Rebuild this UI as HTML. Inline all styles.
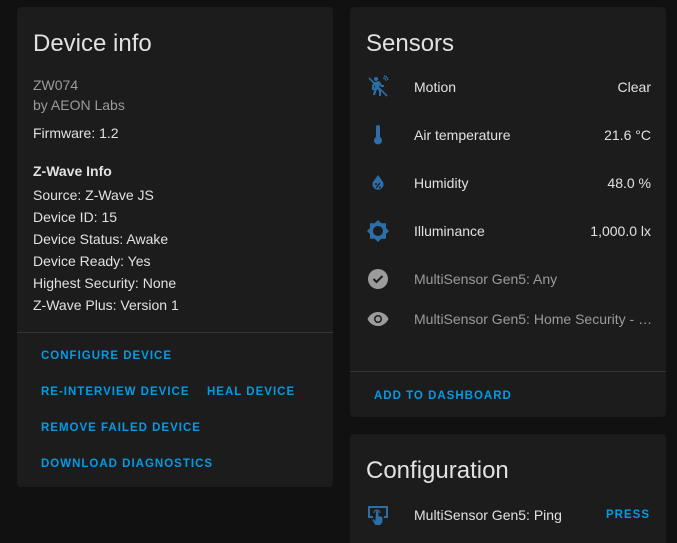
<html style="overflow:hidden;height:543px"><head><style>
body{margin:0;background:#111;font-family:"Liberation Sans",sans-serif;width:677px;height:543px;overflow:hidden;position:relative}
.card{position:absolute;background:#1c1c1c;border-radius:4px}
.t{position:absolute;white-space:nowrap;font-size:14px;color:#e1e1e1}
.h{font-size:24px;color:#e1e1e1}
.g{color:#9b9b9b}
.b{position:absolute;color:#039be5;font-size:11.5px;font-weight:bold;letter-spacing:1px;white-space:nowrap}
.div{position:absolute;height:1px;background:#333}
svg{position:absolute}
</style></head><body>
<div class="card" style="left:17px;top:7px;width:316px;height:480px"></div>
<div class="card" style="left:350px;top:7px;width:316px;height:410px"></div>
<div class="card" style="left:350px;top:434px;width:316px;height:109px;border-radius:4px 4px 0 0"></div>

<div class="t h" style="left:33px;top:30px">Device info</div>
<div class="t g" style="left:33px;top:77px">ZW074</div>
<div class="t g" style="left:33px;top:97px">by AEON Labs</div>
<div class="t" style="left:33px;top:125px">Firmware: 1.2</div>
<div class="t" style="left:33px;top:163px;font-weight:bold">Z-Wave Info</div>
<div class="t" style="left:33px;top:187px">Source: Z-Wave JS</div>
<div class="t" style="left:33px;top:209px">Device ID: 15</div>
<div class="t" style="left:33px;top:231px">Device Status: Awake</div>
<div class="t" style="left:33px;top:253px">Device Ready: Yes</div>
<div class="t" style="left:33px;top:275px">Highest Security: None</div>
<div class="t" style="left:33px;top:297px">Z-Wave Plus: Version 1</div>
<div class="div" style="left:17px;top:332px;width:316px"></div>
<div class="b" style="left:41px;top:350px">CONFIGURE DEVICE</div>
<div class="b" style="left:41px;top:386px">RE-INTERVIEW DEVICE</div>
<div class="b" style="left:207px;top:386px">HEAL DEVICE</div>
<div class="b" style="left:41px;top:422px">REMOVE FAILED DEVICE</div>
<div class="b" style="left:41px;top:458px">DOWNLOAD DIAGNOSTICS</div>

<div class="t h" style="left:366px;top:30px">Sensors</div>
<svg style="left:366px;top:75px" width="24" height="24" viewBox="0 0 24 24" fill="#2c6ea8"><circle cx="10" cy="4" r="2"/><path d="M9 7l-3 3v5h2v-4l1-1-2 10h2l2-6 2 2v5h2v-6l-2-2 .5-3 1.5 2h3v-2h-2l-2-3c-.5-1-1.5-1-2.5-.5z"/><path d="M3 3l18 18" stroke="#2c6ea8" stroke-width="1.6"/><path d="M17 3a3 3 0 013 3M18 1a5 5 0 014 4" stroke="#2c6ea8" fill="none" stroke-width="1.2"/></svg>
<div class="t" style="left:414px;top:79px">Motion</div><div class="t" style="right:26px;top:79px">Clear</div>
<svg style="left:366px;top:123px" width="24" height="24" viewBox="0 0 24 24" fill="#2c6ea8"><path d="M10 4a2 2 0 014 0v10a4 4 0 11-4 0z"/></svg>
<div class="t" style="left:414px;top:127px">Air temperature</div><div class="t" style="right:26px;top:127px">21.6 °C</div>
<svg style="left:366px;top:171px" width="24" height="24" viewBox="0 0 24 24" fill="#2c6ea8"><path d="M12 4l5 7a5.5 5.5 0 11-10 0z"/><path d="M10 17l4-5" stroke="#1c1c1c" stroke-width="1.3"/><circle cx="10" cy="13" r="1" fill="#1c1c1c"/><circle cx="14" cy="16.5" r="1" fill="#1c1c1c"/></svg>
<div class="t" style="left:414px;top:175px">Humidity</div><div class="t" style="right:26px;top:175px">48.0 %</div>
<svg style="left:366px;top:219px" width="24" height="24" viewBox="0 0 24 24" fill="#2c6ea8"><path d="M12 1l3.3 3.3H20v4.7l3 3-3 3v4.7h-4.7L12 23l-3.3-3.3H4V15l-3-3 3-3V4.3h4.7z"/><circle cx="12" cy="12" r="5" fill="#1c1c1c"/></svg>
<div class="t" style="left:414px;top:223px">Illuminance</div><div class="t" style="right:26px;top:223px">1,000.0 lx</div>
<svg style="left:366px;top:267px" width="24" height="24" viewBox="0 0 24 24"><circle cx="12" cy="12" r="10" fill="#9b9b9b"/><path d="M7.5 12l3 3 6-6" stroke="#1c1c1c" stroke-width="2" fill="none"/></svg>
<div class="t g" style="left:414px;top:271px">MultiSensor Gen5: Any</div>
<svg style="left:366px;top:307px" width="24" height="24" viewBox="0 0 24 24" fill="#9b9b9b"><path d="M12 5C7 5 3 8.5 1.5 12 3 15.5 7 19 12 19s9-3.5 10.5-7C21 8.5 17 5 12 5z"/><circle cx="12" cy="12" r="4" fill="#1c1c1c"/><circle cx="12" cy="12" r="2.5"/></svg>
<div class="t g" style="left:414px;top:311px">MultiSensor Gen5: Home Security - …</div>
<div class="div" style="left:350px;top:371px;width:316px"></div>
<div class="b" style="left:374px;top:390px">ADD TO DASHBOARD</div>

<div class="t h" style="left:366px;top:457px">Configuration</div>
<svg style="left:366px;top:503px" width="24" height="24" viewBox="0 0 24 24" fill="#2c6ea8"><path d="M2 3h20v12h-4v-2h2V5H4v8h3v2H2z"/><path d="M10 9a1.2 1.2 0 012.4 0v4l4 1v5l-2 3h-5l-3-5 1-1 2 2z"/><path d="M8 10a3 3 0 016 0" stroke="#2c6ea8" fill="none" stroke-width="1.2"/></svg>
<div class="t" style="left:414px;top:507px">MultiSensor Gen5: Ping</div>
<div class="b" style="left:606px;top:509px">PRESS</div>
</body></html>
